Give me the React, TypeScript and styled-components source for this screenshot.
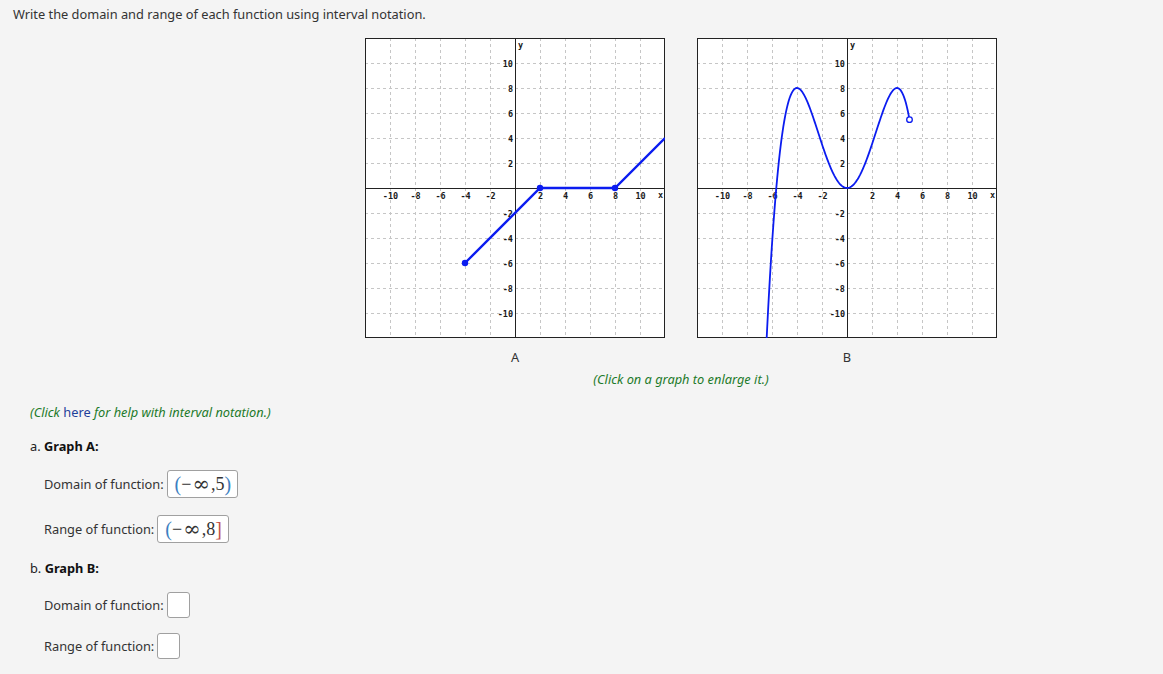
import React from 'react';
import styled, { createGlobalStyle } from 'styled-components';

const GlobalStyle = createGlobalStyle`
    html, body {
        margin: 0;
        padding: 0;
        background: #f4f4f4;
    }
    body {
        font-family: 'Noto Sans', 'Open Sans', sans-serif;
        font-size: 12.8px;
        color: #333;
    }
`;

const Page = styled.div`
    padding: 5px 13px 20px 13px;
    min-height: 100vh;
    box-sizing: border-box;
`;

const Prompt = styled.div`
    line-height: 18px;
    color: #333;
`;

const GraphsBlock = styled.div`
    margin: 15px 0 0 352px;
    width: 632px;
    display: flex;
    flex-direction: column;
    align-items: center;
`;

const GraphsRow = styled.div`
    display: flex;
    gap: 32px;
`;

const Figure = styled.div`
    display: flex;
    flex-direction: column;
    align-items: center;
    cursor: pointer;
`;

const FigureLabel = styled.div`
    margin-top: 10px;
    line-height: 18px;
    color: #333;
`;

const Caption = styled.div`
    margin-top: 4px;
    line-height: 18px;
    font-style: italic;
    color: #1d7a2a;
`;

const Section = styled.div`
    margin-left: 17px;
`;

const HelpLine = styled.div`
    margin-top: 15px;
    line-height: 18px;
    font-style: italic;
    color: #1d7a2a;
`;

const HelpLink = styled.span`
    color: #1f3f9a;
    font-style: normal;
`;

const PartTitle = styled.div<{ top: number }>`
    margin-top: ${({ top }) => top}px;
    line-height: 18px;
    color: #222;

    strong {
        font-weight: 700;
        color: #111;
    }
`;

const AnswerRow = styled.div<{ top: number }>`
    margin: ${({ top }) => top}px 0 0 14px;
    display: flex;
    align-items: center;
    gap: 3px;
    line-height: 18px;
`;

const AnswerBox = styled.div<{ empty?: boolean }>`
    box-sizing: border-box;
    height: ${({ empty }) => (empty ? '26px' : '28px')};
    min-width: ${({ empty }) => (empty ? '23px' : '0')};
    padding: ${({ empty }) => (empty ? '0' : '0 6px 0 7px')};
    border: 1px solid #a0a0a0;
    border-radius: 3px;
    background: #fff;
    display: flex;
    align-items: center;
    font-family: 'Liberation Serif', 'DejaVu Serif', serif;
    font-size: 18px;
    color: #333;
`;

const Paren = styled.span<{ tone: 'open' | 'closed' }>`
    color: ${({ tone }) => (tone === 'open' ? '#3d7fc1' : '#c4504a')};
    font-size: 20px;
    font-weight: 300;
`;

const Infinity = styled.span`
    font-family: 'DejaVu Serif', serif;
    font-size: 21px;
    line-height: 1;
    margin: 0 1px 0 1px;
`;

const GraphSvg = styled.svg`
    display: block;
    background: #fff;
`;

// 12.5 px per unit, origin in the middle of a 300px square
const sx = (x: number) => 150 + x * 12.5;
const sy = (y: number) => 150 - y * 12.5;

const ticks = [-10, -8, -6, -4, -2, 2, 4, 6, 8, 10];
const BLUE = '#0b1cf0';

const Axes: React.FC = () => (
    <g>
        {ticks.map((t) => (
            <g key={t} stroke="#c6c6c6" strokeDasharray="3,3" strokeWidth={1}>
                <line x1={sx(t) + 0.5} y1={0} x2={sx(t) + 0.5} y2={300} />
                <line x1={0} y1={sy(t) + 0.5} x2={300} y2={sy(t) + 0.5} />
            </g>
        ))}
        <line x1={150.5} y1={0} x2={150.5} y2={300} stroke="#222" />
        <line x1={0} y1={150.5} x2={300} y2={150.5} stroke="#222" />
        <g fontFamily="'DejaVu Sans Mono', monospace" fontSize="8.5" fontWeight="700" fill="#1a1a1a">
            {ticks.map((t) => (
                <text key={`x${t}`} x={sx(t) + 0.5} y={161} textAnchor="middle">
                    {t}
                </text>
            ))}
            {ticks.map((t) => (
                <text key={`y${t}`} x={148} y={sy(t) + 3.5} textAnchor="end">
                    {t}
                </text>
            ))}
            <text x={293} y={160}>x</text>
            <text x={153} y={10}>y</text>
        </g>
        <rect x={0.5} y={0.5} width={299} height={299} fill="none" stroke="#222" />
    </g>
);

const quartic = (x: number) => 8 - Math.pow(x * x - 16, 2) / 32;

const curveB = (() => {
    const start = -Math.sqrt(16 + Math.sqrt(32 * 20.5));
    const pts: string[] = [];
    const n = 160;
    for (let i = 0; i <= n; i++) {
        const x = start + ((5 - start) * i) / n;
        pts.push(`${sx(x).toFixed(2)},${sy(quartic(x)).toFixed(2)}`);
    }
    return pts.join(' ');
})();

const GraphA: React.FC = () => (
    <GraphSvg width={300} height={300} viewBox="0 0 300 300">
        <Axes />
        <polyline
            points={`${sx(-4)},${sy(-6)} ${sx(2)},${sy(0)} ${sx(8)},${sy(0)} ${sx(12)},${sy(4)}`}
            fill="none"
            stroke={BLUE}
            strokeWidth={2.4}
        />
        {[[-4, -6], [2, 0], [8, 0]].map(([x, y]) => (
            <circle key={x} cx={sx(x)} cy={sy(y)} r={3.2} fill={BLUE} />
        ))}
    </GraphSvg>
);

const GraphB: React.FC = () => (
    <GraphSvg width={300} height={300} viewBox="0 0 300 300">
        <Axes />
        <polyline points={curveB} fill="none" stroke={BLUE} strokeWidth={1.8} />
        <circle cx={sx(5)} cy={sy(quartic(5))} r={2.8} fill="#fff" stroke={BLUE} strokeWidth={1.3} />
    </GraphSvg>
);

const App: React.FC = () => {
    return (
        <>
            <GlobalStyle />
            <Page>
                <Prompt>Write the domain and range of each function using interval notation.</Prompt>
                <GraphsBlock>
                    <GraphsRow>
                        <Figure>
                            <GraphA />
                            <FigureLabel>A</FigureLabel>
                        </Figure>
                        <Figure>
                            <GraphB />
                            <FigureLabel>B</FigureLabel>
                        </Figure>
                    </GraphsRow>
                    <Caption>(Click on a graph to enlarge it.)</Caption>
                </GraphsBlock>
                <Section>
                    <HelpLine>
                        (Click <HelpLink>here</HelpLink> for help with interval notation.)
                    </HelpLine>
                    <PartTitle top={16}>
                        a. <strong>Graph A:</strong>
                    </PartTitle>
                    <AnswerRow top={15}>
                        Domain of function:
                        <AnswerBox>
                            <Paren tone="open">(</Paren>−<Infinity>∞</Infinity>,5<Paren tone="open">)</Paren>
                        </AnswerBox>
                    </AnswerRow>
                    <AnswerRow top={17}>
                        Range of function:
                        <AnswerBox>
                            <Paren tone="open">(</Paren>−<Infinity>∞</Infinity>,8<Paren tone="closed">]</Paren>
                        </AnswerBox>
                    </AnswerRow>
                    <PartTitle top={16}>
                        b. <strong>Graph B:</strong>
                    </PartTitle>
                    <AnswerRow top={15}>
                        Domain of function:
                        <AnswerBox empty />
                    </AnswerRow>
                    <AnswerRow top={15}>
                        Range of function:
                        <AnswerBox empty />
                    </AnswerRow>
                </Section>
            </Page>
        </>
    );
};

export default App;
